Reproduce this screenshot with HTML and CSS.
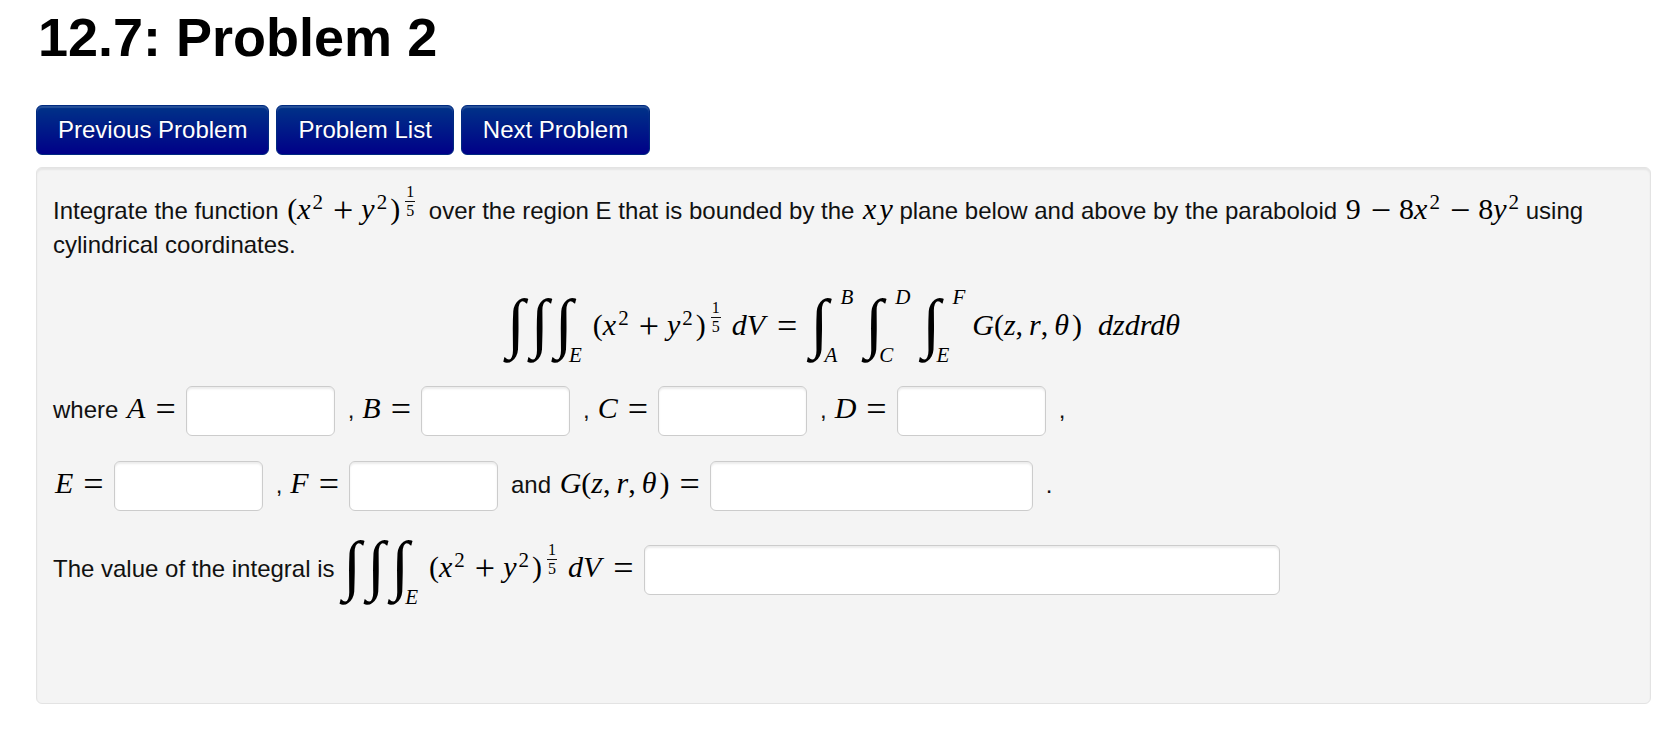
FILE: index.html
```html
<!DOCTYPE html>
<html lang="en">
<head>
<meta charset="utf-8">
<title>12.7: Problem 2</title>
<link rel="stylesheet" href="styles.css">
</head>
<body>
<main class="page">
  <h1 class="title">12.7: Problem 2</h1>
  <nav class="nav">
    <button class="btn" type="button">Previous Problem</button>
    <button class="btn" type="button">Problem List</button>
    <button class="btn" type="button">Next Problem</button>
  </nav>
  <form class="problem">
    <p class="statement">Integrate the function <span class="math"><span>(</span><i>x</i><sup>2</sup><span class="op">+</span><i>y</i><sup>2</sup><span class="close">)</span><span class="frac"><span class="num">1</span><span>5</span></span></span> over the region E that is bounded by the <span class="math"><i>x</i><i class="factor">y</i></span> plane below and above by the paraboloid <span class="math">9<span class="op">−</span>8<i>x</i><sup>2</sup><span class="op">−</span>8<i>y</i><sup>2</sup></span> using cylindrical coordinates.</p>

    <div class="equation math"><span class="int triple"><span class="sign">∫</span><span class="sign">∫</span><span class="sign">∫</span><span class="limits"><i class="lower">E</i></span></span><span>(</span><i>x</i><sup>2</sup><span class="op">+</span><i>y</i><sup>2</sup><span class="close">)</span><span class="frac"><span class="num">1</span><span>5</span></span><i class="diff">dV</i><span class="op">=</span><span class="int"><span class="sign">∫</span><span class="limits"><i>B</i><i class="lower">A</i></span></span><span class="int"><span class="sign">∫</span><span class="limits"><i>D</i><i class="lower">C</i></span></span><span class="int"><span class="sign">∫</span><span class="limits"><i>F</i><i class="lower">E</i></span></span><i>G</i><span>(</span><i>z</i><span class="comma">,</span><i>r</i><span class="comma">,</span><i>θ</i><span class="close">)</span><i class="measure">dzdrdθ</i></div>

    <div class="row">
      <label for="a">where <span class="math"><i>A</i><span class="op rel">=</span></span></label><input class="box" id="a" type="text">
      <span class="sep">,</span><label for="b" class="math"><i>B</i><span class="op rel">=</span></label><input class="box" id="b" type="text">
      <span class="sep">,</span><label for="c" class="math"><i>C</i><span class="op rel">=</span></label><input class="box" id="c" type="text">
      <span class="sep">,</span><label for="d" class="math"><i>D</i><span class="op rel">=</span></label><input class="box" id="d" type="text">
      <span class="sep">,</span>
    </div>
    <div class="row">
      <label for="e" class="math"><i>E</i><span class="op rel">=</span></label><input class="box" id="e" type="text">
      <span class="sep">,</span><label for="f" class="math"><i>F</i><span class="op rel">=</span></label><input class="box" id="f" type="text">
      <label for="g" class="and">and <span class="math"><i>G</i><span>(</span><i>z</i><span class="comma">,</span><i>r</i><span class="comma">,</span><i>θ</i><span class="close">)</span><span class="op rel">=</span></span></label><input class="box medium" id="g" type="text">
      <span class="sep">.</span>
    </div>
    <div class="row result">
      <label for="value">The value of the integral is <span class="math"><span class="int triple"><span class="sign">∫</span><span class="sign">∫</span><span class="sign">∫</span><span class="limits"><i class="lower">E</i></span></span><span>(</span><i>x</i><sup>2</sup><span class="op">+</span><i>y</i><sup>2</sup><span class="close">)</span><span class="frac"><span class="num">1</span><span>5</span></span><i class="diff">dV</i><span class="op rel">=</span></span></label><input class="box wide" id="value" type="text">
    </div>
  </form>
</main>
</body>
</html>
```

FILE: styles.css
```css
* {
  box-sizing: border-box;
}

body {
  margin: 0;
  background: #fff;
  color: #111;
  font: 24px/34px "Liberation Sans", Arial, sans-serif;
}

.page {
  padding: 6px 24px 26px 36px;
}

.title {
  margin: 0 0 37px 2px;
  color: #000;
  font-size: 54px;
  line-height: 62px;
}

.nav {
  display: flex;
  gap: 7px;
  margin-bottom: 12px;
}

.btn {
  height: 50px;
  padding: 0 21px 1px;
  border: 1px solid #002a80;
  border-radius: 6px;
  background: linear-gradient(#003388, #000088);
  box-shadow: inset 0 2px 1px rgba(255, 255, 255, 0.15);
  color: #fff;
  font: inherit;
  text-shadow: 0 -1px 0 rgba(0, 0, 0, 0.25);
}

.problem {
  padding: 15px 16px 65px;
  border: 1px solid #e3e3e3;
  border-radius: 6px;
  background: #f4f4f4;
  box-shadow: inset 0 2px 2px rgba(0, 0, 0, 0.06);
}

.statement {
  margin: 0;
}

.math {
  margin-left: 2px;
  color: #000;
  font-family: "Liberation Serif", "Times New Roman", serif;
  font-size: 30px;
  line-height: 34px;
  white-space: nowrap;
}

.math sup {
  margin-left: 2px;
  font-size: 21px;
  line-height: 0;
  vertical-align: 10px;
}

.op {
  margin: 0 8px 0 10px;
  font-size: 36px;
  line-height: 0;
  vertical-align: -3px;
}

.rel {
  margin-right: 0;
}

.factor,
.close {
  margin-left: 3px;
}

.comma {
  margin-right: 6px;
}

.frac {
  display: inline-flex;
  flex-direction: column;
  margin: 0 7px 0 5px;
  font-size: 16px;
  line-height: 18px;
  text-align: center;
  vertical-align: 22px;
}

.num {
  padding: 0 1px;
  border-bottom: 1px solid #111;
}

.equation {
  margin: 23px 0 15px;
  text-align: center;
}

.int {
  display: inline-flex;
  height: 86px;
  margin: 0 7px 0 5px;
  padding-bottom: 4px;
  text-align: left;
  vertical-align: middle;
}

.triple {
  margin: 0 11px 0 0;
}

.sign {
  width: 24px;
  font-size: 66px;
  font-style: italic;
  line-height: 76px;
}

.limits {
  display: flex;
  flex-direction: column;
  font-size: 21px;
  line-height: 24px;
}

.limits i {
  margin-left: 6px;
}

.limits .lower {
  margin: auto 0 0 -10px;
}

.diff {
  margin: 0 2px 0 4px;
}

.measure {
  margin-left: 16px;
}

.row {
  display: flex;
  align-items: baseline;
  margin-bottom: 25px;
}

.result {
  margin-top: -9px;
}

.box {
  width: 149px;
  height: 50px;
  margin-left: 10px;
  padding: 9px 8px 11px;
  border: 1px solid #ccc;
  border-radius: 6px;
  background: #fff;
  box-shadow: inset 0 2px 2px rgba(0, 0, 0, 0.075);
  font: 24px/28px "Liberation Sans", Arial, sans-serif;
}

.medium {
  width: 323px;
}

.wide {
  width: 636px;
}

.sep {
  margin: 0 6px 0 13px;
}

.and {
  margin-left: 13px;
}
```
